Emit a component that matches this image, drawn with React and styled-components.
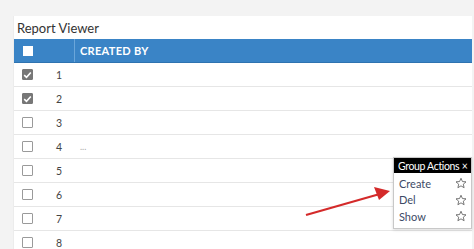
import React from "react";
import styled, { createGlobalStyle } from "styled-components";

const Global = createGlobalStyle`
  html, body { margin: 0; padding: 0; background: #f3f3f3; overflow: hidden; }
  body { font-family: "Lato", "Open Sans", sans-serif; }
  * { box-sizing: border-box; }
`;

const Page = styled.div`
  position: relative;
  width: 474px;
  height: 249px;
  padding: 16px 2px 0 13px;
`;

const Panel = styled.div`
  background: #fff;
  height: 100%;
  border-left: 1px solid #ececec;
`;

const Title = styled.div`
  height: 23px;
  padding: 4px 0 0 3px;
  font-size: 13px;
  color: #333;
`;

const HeaderRow = styled.div`
  display: grid;
  grid-template-columns: 60px 1fr;
  height: 24px;
  background: #3a84c6;
  border-bottom: 1px solid #2f73b0;
`;

const HeadCell = styled.div`
  display: flex;
  align-items: center;
  padding-left: ${(p) => p.$pad || 0}px;
  color: #fff;
  font-size: 11px;
  font-weight: 700;
  letter-spacing: 0.3px;
  border-left: ${(p) => (p.$divider ? "1px solid #6aa6da" : "none")};
`;

const Row = styled.div`
  display: grid;
  grid-template-columns: 60px 1fr;
  height: 24px;
  border-bottom: 1px solid #e6e6e6;
`;

const Cell = styled.div`
  display: flex;
  align-items: center;
  padding-left: ${(p) => p.$pad || 0}px;
  font-size: 10.5px;
  color: #444;
  border-left: ${(p) => (p.$divider ? "1px solid #f0f0f0" : "none")};
`;

const Box = styled.span`
  display: inline-flex;
  align-items: center;
  justify-content: center;
  width: 11px;
  height: 11px;
  border: 1px solid ${(p) => (p.$checked ? "#777" : "#9a9a9a")};
  background: ${(p) => (p.$checked ? "#777" : "#fff")};
  border-radius: 1px;
  margin-left: 8px;
  margin-right: 23px;
`;

const HeadBox = styled.span`
  display: inline-block;
  width: 10px;
  height: 10px;
  background: #fff;
  margin-left: 9px;
`;

const Dots = styled.span`
  color: #aaa;
  font-size: 9px;
`;

const Popup = styled.div`
  position: absolute;
  left: 393px;
  top: 157px;
  width: 79px;
  background: #fff;
  border: 1px solid #c8c8c8;
  box-shadow: 0 1px 3px rgba(0, 0, 0, 0.15);
`;

const PopupHead = styled.div`
  background: #000;
  color: #fff;
  font-size: 10.5px;
  letter-spacing: -0.35px;
  height: 15px;
  padding-left: 4px;
  display: flex;
  align-items: center;
  white-space: nowrap;
  overflow: hidden;
`;

const PopupItem = styled.div`
  display: flex;
  align-items: center;
  justify-content: space-between;
  height: 16.5px;
  padding: 0 4px 0 5px;
  font-size: 11px;
  color: #3d4a66;
`;

const PopupBody = styled.div`
  padding: 2px 0 3px;
`;

const Arrow = styled.svg`
  position: absolute;
  left: 0;
  top: 0;
  pointer-events: none;
`;

const Check = () => (
  <svg width="9" height="8" viewBox="0 0 9 8">
    <path d="M1.2 4.2 L3.5 6.3 L7.8 1.5" stroke="#fff" strokeWidth="1.6" fill="none" />
  </svg>
);

const Star = () => (
  <svg width="12" height="12" viewBox="0 0 24 24">
    <path
      d="M12 2.5l2.9 6.6 7.1.6-5.4 4.7 1.6 7-6.2-3.7-6.2 3.7 1.6-7L2 9.7l7.1-.6z"
      fill="none"
      stroke="#555"
      strokeWidth="1.6"
      strokeLinejoin="round"
    />
  </svg>
);

const rows = [
  { n: 1, c: true },
  { n: 2, c: true },
  { n: 3 },
  { n: 4, dots: true },
  { n: 5 },
  { n: 6 },
  { n: 7 },
  { n: 8 },
];

export default function App() {
  return (
    <>
      <Global />
      <Page>
        <Panel>
          <Title>Report Viewer</Title>
          <HeaderRow>
            <HeadCell>
              <HeadBox />
            </HeadCell>
            <HeadCell $divider $pad={5}>CREATED BY</HeadCell>
          </HeaderRow>
          {rows.map((r) => (
            <Row key={r.n}>
              <Cell>
                <Box $checked={r.c}>{r.c && <Check />}</Box>
                {r.n}
              </Cell>
              <Cell $pad={6}>{r.dots && <Dots>...</Dots>}</Cell>
            </Row>
          ))}
        </Panel>
        <Popup>
          <PopupHead>Group Actions ×</PopupHead>
          <PopupBody>
            <PopupItem>Create<Star /></PopupItem>
            <PopupItem>Del<Star /></PopupItem>
            <PopupItem>Show<Star /></PopupItem>
          </PopupBody>
        </Popup>
        <Arrow width="474" height="249">
          <line x1="306" y1="215" x2="378" y2="194.5" stroke="#d42a2a" strokeWidth="2.2" />
          <polygon points="390,191 374,187 379,200" fill="#d42a2a" />
        </Arrow>
      </Page>
    </>
  );
}
